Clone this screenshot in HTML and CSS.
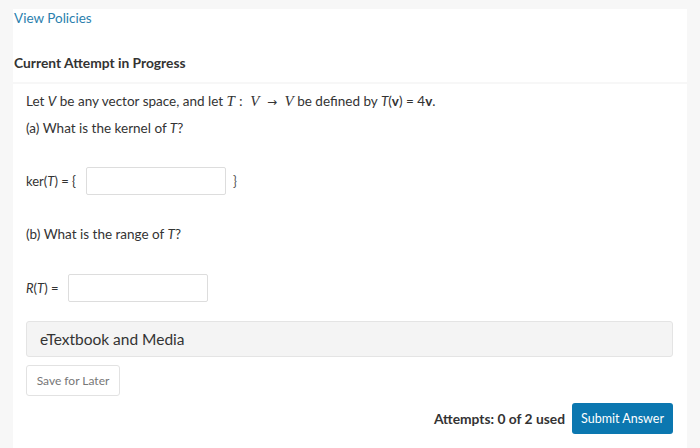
FILE: index.html
```html
<!DOCTYPE html>
<html>
<head>
<meta charset="utf-8">
<link rel="stylesheet" href="styles.css">
</head>
<body>
<div class="page">
  <div class="header">
    <a class="policies" href="#">View Policies</a>
    <h2 class="attempt-title">Current Attempt in Progress</h2>
  </div>
  <div class="content">
    <p class="q-line">Let <i>V</i> be any vector space, and let <span class="math"><i>T</i>&nbsp;:&nbsp; <i>V</i>&nbsp; <span class="arrow">→</span>&nbsp; <i>V</i></span> be defined by <i>T</i>(<b>v</b>) = 4<b>v</b>.</p>
    <p class="q-part">(a) What is the kernel of <i>T</i>?</p>
    <div class="answer-row ker">
      <span class="lbl">ker(<i>T</i>) = {</span>
      <span class="box wide"></span>
      <span class="brace">}</span>
    </div>
    <p class="q-part part-b">(b) What is the range of <i>T</i>?</p>
    <div class="answer-row range">
      <span class="lbl small"><i>R</i>(<i>T</i>) =</span>
      <span class="box wide"></span>
    </div>
    <div class="etext">eTextbook and Media</div>
    <button class="save">Save for Later</button>
    <div class="submit-row">
      <span class="attempts">Attempts: 0 of 2 used</span>
      <button class="submit">Submit Answer</button>
    </div>
  </div>
</div>
</body>
</html>
```
FILE: styles.css
```css
html, body {
  margin: 0;
  padding: 0;
  background: #f7f7f7;
  font-family: Lato, "Open Sans", sans-serif;
  color: #333;
}
.page {
  margin-left: 13px;
  width: 674px;
  padding-top: 9px;
}
.header {
  background: #fff;
  padding: 0 1px 10px 1px;
}
.policies {
  display: block;
  font-size: 13.5px;
  line-height: 18px;
  color: #2b7fae;
  text-decoration: none;
}
.attempt-title {
  margin: 27px 0 0 0;
  font-size: 13.8px;
  line-height: 18px;
  font-weight: 700;
  color: #333;
}
.content {
  margin-top: 2px;
  background: #fff;
  padding: 7px 14px 10px 13px;
  box-sizing: border-box;
  min-height: 364px;
}
.q-line {
  margin: 0;
  font-size: 13.5px;
  line-height: 20px;
}
.math {
  font-family: "Liberation Serif", "DejaVu Serif", serif;
  font-size: 15px;
}
.math i { font-style: italic; }
.arrow { font-family: "DejaVu Sans", sans-serif; font-size: 12px; }
.q-part {
  margin: 6px 0 0 0;
  font-size: 13.5px;
  line-height: 20px;
}
.part-b { margin-top: 29px; }
.answer-row {
  display: flex;
  align-items: center;
  height: 28px;
  margin-top: 29px;
  font-size: 13px;
}
.lbl { margin-right: 10px; }
.lbl.small { font-size: 13px; margin-right: 9px; }
.box {
  display: block;
  height: 26px;
  border: 1px solid #ddd;
  border-radius: 2px;
  background: #fff;
  width: 138px;
}
.brace { margin-left: 7px; font-size: 13px; color: #555; }
.range { margin-top: 30px; height: 28px; }
.etext {
  margin-top: 19px;
  height: 34px;
  line-height: 34px;
  background: #f4f4f4;
  border: 1px solid #e4e4e4;
  border-radius: 3px;
  padding-left: 13px;
  font-size: 15.5px;
  color: #333;
}
.save {
  display: block;
  margin-top: 8px;
  height: 31px;
  width: 94px;
  padding: 0;
  background: #fff;
  border: 1px solid #e2e2e2;
  border-radius: 3px;
  font-family: Lato, sans-serif;
  font-size: 12px;
  color: #777;
}
.submit-row {
  display: flex;
  justify-content: flex-end;
  align-items: center;
  margin-top: 7px;
}
.attempts {
  font-size: 13.8px;
  font-weight: 700;
  color: #333;
  margin-right: 7px;
}
.submit {
  height: 31px;
  width: 101px;
  padding: 0;
  background: #0b77b0;
  border: none;
  border-radius: 3px;
  color: #fff;
  font-family: Lato, sans-serif;
  font-size: 12.5px;
}
```
